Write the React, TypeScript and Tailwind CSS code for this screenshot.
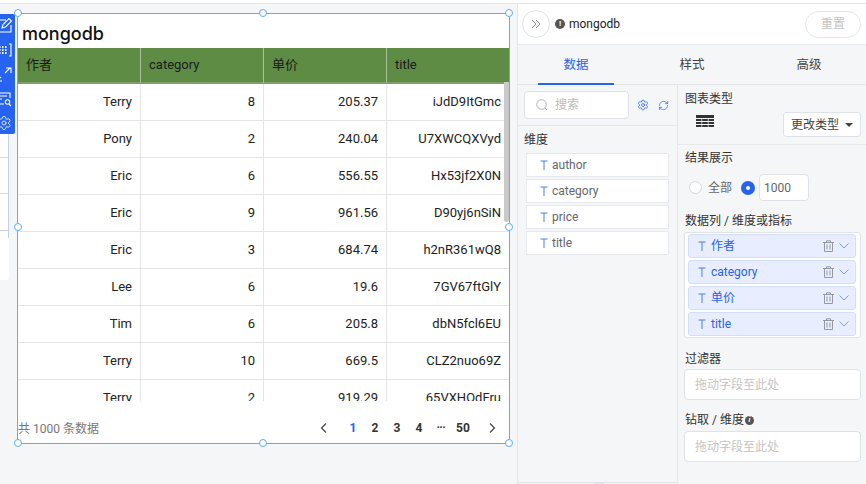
import { RefreshCw, Settings } from "lucide-react"

const rows = [
  ["Terry", "8", "205.37", "iJdD9ItGmc"],
  ["Pony", "2", "240.04", "U7XWCQXVyd"],
  ["Eric", "6", "556.55", "Hx53jf2X0N"],
  ["Eric", "9", "961.56", "D90yj6nSiN"],
  ["Eric", "3", "684.74", "h2nR361wQ8"],
  ["Lee", "6", "19.6", "7GV67ftGlY"],
  ["Tim", "6", "205.8", "dbN5fcl6EU"],
  ["Terry", "10", "669.5", "CLZ2nuo69Z"],
  ["Terry", "2", "919.29", "65VXHQdFru"],
]

function Handle({ className }: { className: string }) {
  return <span className={`absolute z-10 h-[8px] w-[8px] rounded-full border border-[#5cadf0] bg-white ${className}`} />
}

function ToolIcon({ children }: { children: React.ReactNode }) {
  return (
    <svg width="16" height="16" viewBox="0 0 16 16" fill="none" stroke="white" strokeWidth="1.1" className="shrink-0">
      {children}
    </svg>
  )
}

function Toolbar() {
  return (
    <div className="absolute left-0 top-[14px] z-20 flex h-[120px] w-[15px] flex-col items-end gap-[8.5px] overflow-hidden rounded-r-[2px] bg-[#2563f0] pr-[3px] pt-[3px]">
      <ToolIcon>
        <path d="M10 3H0v12h15V8" />
        <path d="M6 11l1-3.500 6-6 2.500 2.500-6 6z" />
      </ToolIcon>
      <ToolIcon>
        <path d="M0 5h1.500M3 5h1.500M6 5h1.500M9 5h1.500M0 8h1.500M3 8h1.500M6 8h1.500M9 8h1.500M0 11h1.500M3 11h1.500M6 11h1.500M9 11h1.500" strokeWidth="2" />
        <path d="M13 2h2v12h-2" />
      </ToolIcon>
      <ToolIcon>
        <path d="M1 15l4-4M9 7l5-5M10 2h5v5M1 10v5h5" />
      </ToolIcon>
      <ToolIcon>
        <path d="M14 7V2H0v11h8" />
        <path d="M2 5h9M2 8h4" />
        <circle cx="11.500" cy="11" r="2.200" />
        <path d="M13 13l2 2" />
      </ToolIcon>
      <Settings size={16} color="white" strokeWidth={1.2} className="shrink-0" />
    </div>
  )
}

function BackPanel() {
  return (
    <div className="absolute left-0 top-[134px] flex h-[146px] w-[9px] flex-col rounded-br-[3px] bg-white">
      <div className="h-[104px] border-r border-[#c5d0ea]">
        <div className="mt-[23px] h-[37px] border-y border-[#d5d9e2]" />
        <div className="h-[37px] border-b border-[#c5d0ea]" />
      </div>
    </div>
  )
}

function ChartCard() {
  return (
    <div className="absolute left-[17px] top-[13px] flex h-[431px] w-[493px] flex-col border border-[#5cadf0] bg-white">
      <Handle className="left-[-4px] top-[-5px]" />
      <Handle className="left-[241px] top-[-5px]" />
      <Handle className="right-[-4px] top-[-5px]" />
      <Handle className="left-[-4px] top-[209px]" />
      <Handle className="right-[-4px] top-[209px]" />
      <Handle className="bottom-[-4px] left-[-4px]" />
      <Handle className="bottom-[-4px] left-[241px]" />
      <Handle className="bottom-[-4px] right-[-4px]" />
      <div className="flex h-[34px] shrink-0 items-center pl-[4px] pt-[6px] font-['Inter',sans-serif] text-[18px] font-medium leading-none text-[#111]">mongodb</div>
      <div className="relative h-[353px] shrink-0 overflow-hidden">
        <div className="grid h-[36px] grid-cols-[123px_123px_123px_122px] bg-[#5e8c45] text-[13px] leading-[34px] text-[#1a1a1a]">
          {["作者", "category", "单价", "title"].map((h, i) => (
            <div key={h} className={`border-b-2 border-b-[#7d9f6a] pl-[8px] ${i < 3 ? "border-r border-r-[#a9c29c]" : ""}`}>
              {h}
            </div>
          ))}
        </div>
        {rows.map((row, r) => (
          <div key={r} className="grid h-[37px] grid-cols-[123px_123px_123px_122px] border-b border-[#e5e5e5] text-[13px] leading-[36px] text-[#222]">
            {row.map((cell, i) => (
              <div key={i} className={`pr-[8px] text-right ${i < 3 ? "border-r border-[#e5e5e5]" : ""}`}>
                {cell}
              </div>
            ))}
          </div>
        ))}
        <div className="absolute right-0 top-[34px] h-[140px] w-[5px] rounded-b-[2px] bg-[#c9c9c9]" />
      </div>
      <div className="flex flex-1 items-start justify-between pt-[18px]">
        <span className="pt-[1px] text-[12px] leading-[18px] text-[#777]">共 1000 条数据</span>
        <div className="flex h-[18px] items-center pr-[13px] text-[12px] font-bold leading-[18px] text-[#333]">
          <svg width="8" height="10" viewBox="0 0 8 10" fill="none" stroke="#444" strokeWidth="1.200" className="mr-[14px]">
            <path d="M6 .5L1.500 5 6 9.500" />
          </svg>
          <span className="w-[22px] text-center text-[#2563f0]">1</span>
          <span className="w-[22px] text-center">2</span>
          <span className="w-[22px] text-center">3</span>
          <span className="w-[22px] text-center">4</span>
          <span className="w-[22px] text-center text-[8px]">•••</span>
          <span className="w-[22px] text-center">50</span>
          <svg width="8" height="10" viewBox="0 0 8 10" fill="none" stroke="#444" strokeWidth="1.200" className="ml-[14px]">
            <path d="M2 .5L6.500 5 2 9.500" />
          </svg>
        </div>
      </div>
    </div>
  )
}

function TIcon() {
  return (
    <svg width="8" height="10" viewBox="0 0 8 10" fill="none" stroke="#4a7fe0" strokeWidth="1" className="shrink-0">
      <path d="M.5 1h7M4 1v9" />
    </svg>
  )
}

function TrashIcon() {
  return (
    <svg width="11" height="12" viewBox="0 0 11 12" fill="none" stroke="#8a8f99" strokeWidth="0.9">
      <path d="M0 2.500h11M3.500 2.500V.8h4v1.700M1.500 2.500v9h8v-9M4 4.500v5M7 4.500v5" />
    </svg>
  )
}

function Dropzone() {
  return (
    <div className="flex h-[31px] w-[177px] items-center rounded-[4px] border border-[#dfe2e8] bg-white pl-[10px] text-[12px] text-[#c4c4c4]">
      拖动字段至此处
    </div>
  )
}

function SidePanel() {
  return (
    <div className="flex h-full w-[349px] shrink-0 flex-col border-l border-[#e3e5e8] bg-[#f5f6f8]">
      <div className="flex h-[41px] shrink-0 items-center border-b border-[#e8e9ec] bg-white pl-[4px] pr-[5px]">
        <span className="flex h-[28px] w-[28px] items-center justify-center rounded-full border border-[#dfe2e8]">
          <svg width="10" height="10" viewBox="0 0 10 10" fill="none" stroke="#777" strokeWidth="0.800">
            <path d="M1 1l4 4-4 4M5 1l4 4-4 4" />
          </svg>
        </span>
        <span className="ml-[5px] flex h-[10px] w-[10px] items-center justify-center rounded-full bg-[#555] text-[8px] font-bold leading-none text-white">!</span>
        <span className="ml-[4px] text-[12px] text-[#222]">mongodb</span>
        <span className="ml-auto flex h-[27px] w-[56px] items-center justify-center rounded-full border border-[#e3e6ee] text-[12px] text-[#c4c4c4]">重置</span>
      </div>
      <div className="flex h-[40px] shrink-0 border-b border-[#e3e5e8] text-[12.5px] leading-[39px] text-[#444]">
        <div className="relative ml-[20px] h-[40px] w-[76px] text-center text-[#2563f0]">
          数据
          <span className="absolute bottom-0 left-0 h-[2px] w-full bg-[#2563f0]" />
        </div>
        <div className="ml-[40px] w-[76px] text-center">样式</div>
        <div className="ml-[41px] w-[76px] text-center">高级</div>
      </div>
      <div className="flex min-h-0 flex-1">
        <div className="relative w-[160px] shrink-0 border-r border-[#e3e5e8]">
          <div className="flex h-[41px] items-center border-b border-[#e8e9ec] pl-[6px]">
            <div className="flex h-[28px] w-[105px] items-center rounded-[4px] border border-[#dfe2e8] bg-white pl-[11px] text-[12px] text-[#bbb]">
              <svg width="12" height="12" viewBox="0 0 12 12" fill="none" stroke="#aaa" strokeWidth="0.9">
                <circle cx="5.500" cy="5.500" r="4.800" />
                <path d="M9 9l2 2" />
              </svg>
              <span className="ml-[7px]">搜索</span>
            </div>
            <Settings size={12} color="#2563f0" strokeWidth={1.500} className="ml-[8px]" />
            <RefreshCw size={11} color="#2563f0" strokeWidth={1.500} className="ml-[9px]" />
          </div>
          <div className="pl-[6px] pt-[5px] text-[12px] leading-[18px] text-[#333]">维度</div>
          <div className="mt-[4px] flex flex-col gap-[2px] pl-[8px]">
            {["author", "category", "price", "title"].map((f) => (
              <div key={f} className="flex h-[24px] w-[143px] items-center gap-[4px] border border-[#e8e9ec] bg-white pl-[13px] text-[12px] text-[#666]">
                <TIcon />
                {f}
              </div>
            ))}
          </div>
          <div className="absolute bottom-[1px] left-0 w-full border-t border-[#dfe2e8]" />
          <span className="absolute bottom-0 left-[76px] h-[2px] w-[10px] bg-[#dfe2e8]" />
        </div>
        <div className="min-w-0 flex-1">
          <div className="h-[60px] border-b border-[#e8e9ec] pl-[6px] pt-[6px]">
            <div className="pl-[1px] text-[12px] leading-[16px] text-[#333]">图表类型</div>
            <div className="flex w-[177px] items-start justify-between">
              <svg width="18" height="14" viewBox="0 0 18 14" className="ml-[12px] mt-[8px]" fill="#333">
                <path d="M0 0h18v3H0zM0 4h5.500v2H0zM6.200 4h5.600v2H6.200zM12.500 4H18v2h-5.500zM0 7h5.500v2H0zM6.200 7h5.600v2H6.200zM12.500 7H18v2h-5.500zM0 10h5.500v2H0zM6.200 10h5.600v2H6.200zM12.500 10H18v2h-5.500z" />
              </svg>
              <div className="mt-[5px] flex h-[25px] w-[78px] items-center justify-center gap-[6px] rounded-[3px] border border-[#dfe2e8] bg-white text-[12px] text-[#444]">
                更改类型
                <span className="h-0 w-0 border-x-[4px] border-t-[4px] border-x-transparent border-t-[#444]" />
              </div>
            </div>
          </div>
          <div className="pl-[6px]">
            <div className="pl-[1px] pt-[4px] text-[12px] leading-[18px] text-[#333]">结果展示</div>
            <div className="mt-[7px] flex h-[27px] items-center text-[12px] text-[#666]">
              <span className="ml-[5px] h-[13px] w-[13px] rounded-full border border-[#d5d8de] bg-white" />
              <span className="ml-[6px]">全部</span>
              <span className="ml-[9px] flex h-[14px] w-[14px] items-center justify-center rounded-full bg-[#2563f0]">
                <span className="h-[4px] w-[4px] rounded-full bg-white" />
              </span>
              <span className="ml-[4px] flex h-[27px] w-[50px] items-center rounded-[4px] border border-[#dfe2e8] bg-white pl-[4px]">1000</span>
            </div>
            <div className="mt-[11px] pl-[1px] text-[12px] leading-[18px] text-[#333]">数据列 / 维度或指标</div>
            <div className="mt-[2px] flex w-[177px] flex-col gap-[2px] rounded-[3px] border border-[#dfe2e8] bg-white py-[1px] pl-[3px] pr-[4px]">
              {["作者", "category", "单价", "title"].map((f) => (
                <div key={f} className="flex h-[24px] items-center gap-[5px] rounded-[3px] border border-[#d3dffa] bg-[#e8eeff] pl-[9px] pr-[6px] text-[12px] text-[#2563f0]">
                  <TIcon />
                  {f}
                  <span className="ml-auto">
                    <TrashIcon />
                  </span>
                  <svg width="10" height="6" viewBox="0 0 10 6" fill="none" stroke="#6a94ea" strokeWidth="0.9" className="mb-[1px]">
                    <path d="M.5.5L5 5 9.500.5" />
                  </svg>
                </div>
              ))}
            </div>
            <div className="mt-[12px] pl-[1px] text-[12px] leading-[18px] text-[#333]">过滤器</div>
            <div className="mt-[1px]">
              <Dropzone />
            </div>
            <div className="mt-[11px] flex items-center gap-[1px] pl-[1px] text-[12px] leading-[18px] text-[#333]">
              钻取 / 维度
              <span className="flex h-[9px] w-[9px] items-center justify-center rounded-full bg-[#555] text-[7px] font-bold italic leading-none text-white">i</span>
            </div>
            <div className="mt-[2px]">
              <Dropzone />
            </div>
          </div>
        </div>
      </div>
    </div>
  )
}

export default function App() {
  return (
    <div className="flex h-[484px] w-[866px] flex-col overflow-hidden bg-[#f5f6f8] font-['Roboto','Noto_Sans_CJK_SC',sans-serif]">
      <div className="h-[4px] shrink-0 border-b border-[#e6e6e6] bg-white" />
      <div className="flex min-h-0 flex-1">
        <div className="relative h-full w-[517px] shrink-0">
          <div className="absolute left-0 top-[-4px] h-[484px] w-full">
            <BackPanel />
            <Toolbar />
            <ChartCard />
          </div>
        </div>
        <SidePanel />
      </div>
    </div>
  )
}
